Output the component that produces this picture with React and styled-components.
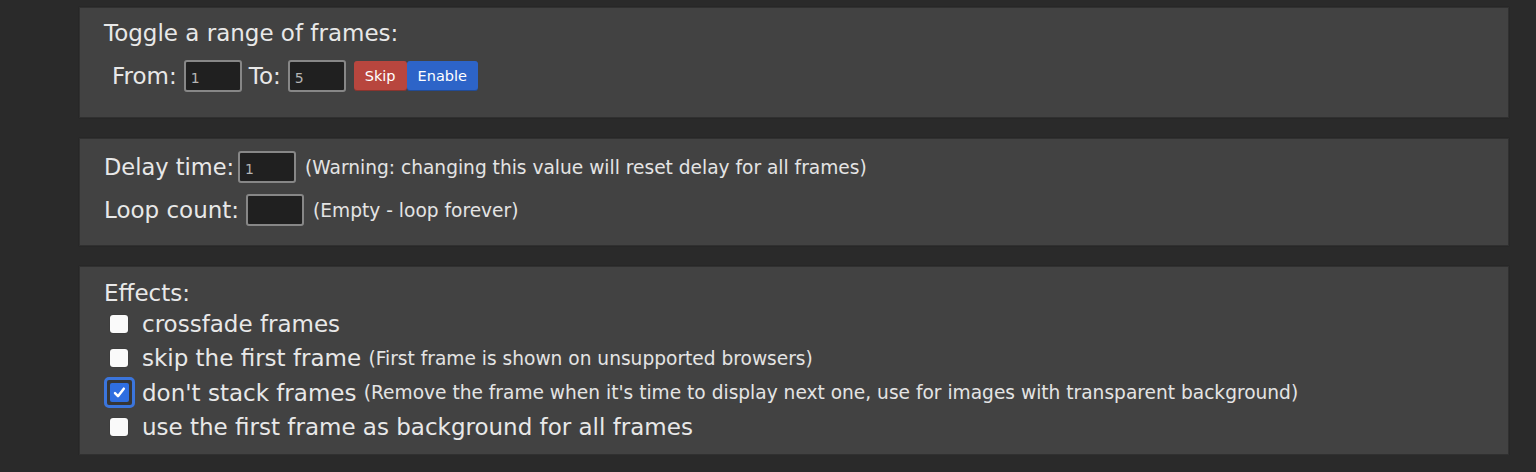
import React from "react";
import styled, { createGlobalStyle } from "styled-components";

const Global = createGlobalStyle`
  html, body { margin: 0; padding: 0; background: #2a2a2a; }
  body { font-family: "DejaVu Sans", "Noto Sans", sans-serif; color: #e6e6e6; }
`;

const Page = styled.div`
  padding: 7px 0 0 79px;
  display: flex;
  flex-direction: column;
  gap: 20px;
  width: 1430px;
`;

const Panel = styled.section`
  background: #424242;
  border: 1px solid #303030;
  box-shadow: 0 0 1px rgba(0,0,0,0.4);
  padding: ${p => p.$pad};
  display: flex;
  flex-direction: column;
  gap: ${p => p.$gap || "0px"};
`;

const Title = styled.div`
  font-size: 23px;
  line-height: 28px;
  height: 28px;
  color: #e8e8e8;
`;

const Row = styled.div`
  display: flex;
  align-items: center;
  height: 32px;
  padding-left: ${p => p.$indent || "0px"};
  gap: ${p => p.$gap || "7px"};
`;

const Label = styled.span`
  font-size: ${p => p.$size || "23px"};
  color: #e8e8e8;
  white-space: pre;
`;

const Note = styled.span`
  font-size: 18.6px;
  color: #e4e4e4;
  white-space: pre;
  margin-left: ${p => p.$ml || "0px"};
`;

const Input = styled.input`
  box-sizing: border-box;
  width: 58px;
  height: 32px;
  background: #202020;
  border: 2px solid #878787;
  border-radius: 3px;
  color: #b5b5b5;
  font-family: "DejaVu Sans", sans-serif;
  font-size: 14px;
  padding: 4px 0 0 5px;
  margin: 0;
  outline: none;
`;

const Buttons = styled.div`
  display: flex;
  margin-left: 1px;
`;

const Btn = styled.button`
  height: 30px;
  border: none;
  border-radius: 3px;
  padding: 0 11px;
  margin: 0;
  font-family: "DejaVu Sans", sans-serif;
  font-size: 14.5px;
  color: #fff;
  background: ${p => p.$bg};
  box-shadow: inset 0 -1px 0 rgba(0,0,0,0.25);
`;

const Box = styled.span`
  box-sizing: border-box;
  width: 18px;
  height: 18px;
  border-radius: 3px;
  background: #fafafa;
  flex: none;
  margin: 0 14px 0 6px;
  box-shadow: 0 0 1px rgba(0,0,0,0.6);
`;

const CheckedBox = styled.span`
  box-sizing: border-box;
  width: 31px;
  height: 31px;
  border-radius: 5px;
  border: 3px solid #3b75dc;
  background: #363636;
  padding: 3px;
  display: inline-flex;
  flex: none;
  margin: 0 7px 0 0;
  & > span {
    flex: 1;
    border-radius: 2px;
    background: #2f6ee0;
    display: flex;
    align-items: center;
    justify-content: center;
  }
`;

function Check({ checked }) {
  if (checked) {
    return (
      <CheckedBox>
        <span>
          <svg width="15" height="15" viewBox="0 0 14 14">
            <path d="M2.8 7.6 L5.6 10.4 L11 3.4" fill="none" stroke="#fff" strokeWidth="2.3" strokeLinecap="round" strokeLinejoin="round" />
          </svg>
        </span>
      </CheckedBox>
    );
  }
  return <Box />;
}

const EffectRow = styled.div`
  display: flex;
  align-items: center;
  height: 34.5px;
`;

export default function App() {
  return (
    <>
      <Global />
      <Page>
        <Panel $pad="11px 24px 25px" $gap="13px">
          <Title>Toggle a range of frames:</Title>
          <Row $indent="8px">
            <Label>From:</Label>
            <Input defaultValue="1" />
            <Label>To:</Label>
            <Input defaultValue="5" />
            <Buttons>
              <Btn $bg="#b8463e">Skip</Btn>
              <Btn $bg="#2d64c8">Enable</Btn>
            </Buttons>
          </Row>
        </Panel>
        <Panel $pad="12px 24px 19px" $gap="11px">
          <Row $gap="4px">
            <Label $size="22.5px">Delay time:</Label>
            <Input defaultValue="1" />
            <Note $ml="5px">(Warning: changing this value will reset delay for all frames)</Note>
          </Row>
          <Row $gap="7px">
            <Label>Loop count:</Label>
            <Input defaultValue="" />
            <Note $ml="2px">(Empty - loop forever)</Note>
          </Row>
        </Panel>
        <Panel $pad="11.5px 24px 9.5px 24px">
          <Title>Effects:</Title>
          <EffectRow>
            <Check />
            <Label>crossfade frames</Label>
          </EffectRow>
          <EffectRow>
            <Check />
            <Label>skip the first frame </Label>
            <Note>(First frame is shown on unsupported browsers)</Note>
          </EffectRow>
          <EffectRow>
            <Check checked />
            <Label>don't stack frames </Label>
            <Note>(Remove the frame when it's time to display next one, use for images with transparent background)</Note>
          </EffectRow>
          <EffectRow>
            <Check />
            <Label>use the first frame as background for all frames</Label>
          </EffectRow>
        </Panel>
      </Page>
    </>
  );
}
